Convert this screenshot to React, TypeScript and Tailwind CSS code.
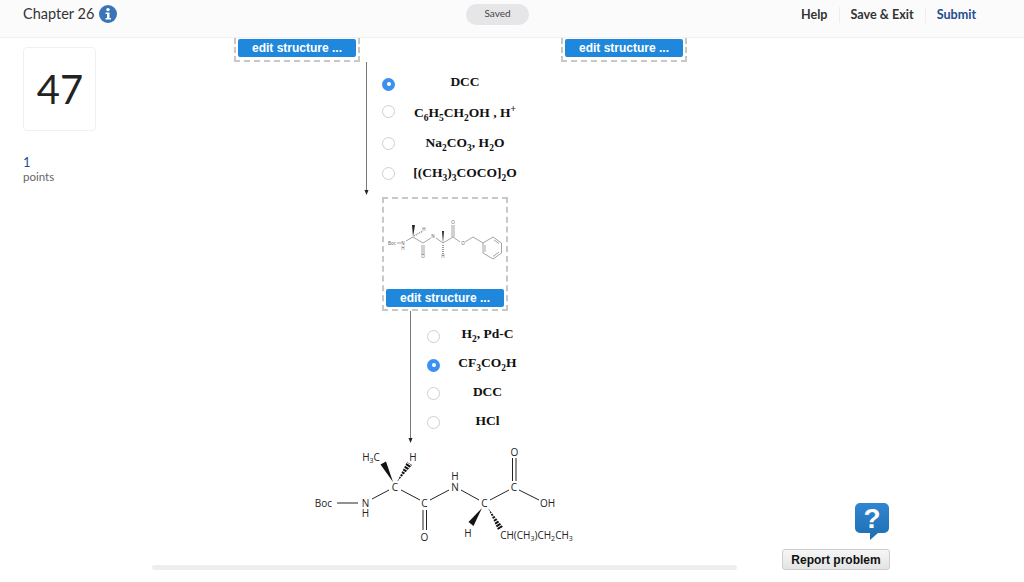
import type { ReactNode } from "react";

const S = ({ children }: { children: ReactNode }) => <sub className="-bottom-[4px] text-[9.5px]">{children}</sub>;

const Radio = ({ checked, className = "" }: { checked?: boolean; className?: string }) =>
    checked ? (
        <span className={`flex h-[13px] w-[13px] shrink-0 items-center justify-center rounded-full bg-[#3b90f0] ${className}`}>
            <span className="h-[4px] w-[4px] rounded-full bg-white"></span>
        </span>
    ) : (
        <span className={`h-[13px] w-[13px] shrink-0 rounded-full border border-[#cfcfcf] bg-white ${className}`}></span>
    );

interface OptionProps {
    checked?: boolean;
    children: ReactNode;
    radioClass?: string;
    rowClass: string;
    labelClass: string;
}

const Option = ({ checked, children, radioClass, rowClass, labelClass }: OptionProps) => (
    <div className={`flex items-center ${rowClass}`}>
        <Radio checked={checked} className={radioClass} />
        <div className={`text-center font-['Liberation_Serif',serif] text-[13.5px] font-bold leading-[15px] text-[#111] ${labelClass}`}>
            {children}
        </div>
    </div>
);

const Arrow = ({ height }: { height: number }) => (
    <svg width="7" height={height} viewBox={`0 0 7 ${height}`} className="shrink-0">
        <line x1="3.5" y1="0" x2="3.5" y2={height - 4} stroke="#777" strokeWidth="1" />
        <polygon points={`1.5,${height - 5} 5.5,${height - 5} 3.5,${height}`} fill="#222" />
    </svg>
);

const EditButton = () => (
    <div className="flex h-[18px] w-[118px] items-center justify-center rounded-[2px] bg-[#1f88dc] font-['Liberation_Sans',sans-serif] text-[12px] font-bold text-white">
        edit structure ...
    </div>
);

const TopBox = () => (
    <div className="flex h-[24px] w-[126px] justify-center border-2 border-t-0 border-dashed border-[#c8c8c8] bg-white pt-[1px]">
        <EditButton />
    </div>
);

const SmallMolecule = () => (
    <svg width="122" height="72" viewBox="384 199 122 72" className="block opacity-[0.99]">
        <g stroke="#666" strokeWidth="0.6" fill="none">
            <path d="M397 243H401M406 241L413 237L423 243L431 238M436 238L443 243L453 237L460 242M465 242L473 237L483 243" />
            <path d="M422 245V255M424 245V255M452 237V225M454 237V225" />
            <path d="M483 243L493 237L501.500 243V253L493 259L483 253Z" />
            <path d="M485 245V252M493 256.500L499 252M494 240L499 243.500" />
        </g>
        <polygon points="413,237 412,225 415,225" fill="#222" />
        <polygon points="443,243 442,231 444,231" fill="#222" />
        <path d="M414 236L423 231" stroke="#777" strokeWidth="1.200" strokeDasharray="1 1" />
        <path d="M443 245V254" stroke="#777" strokeWidth="1.500" strokeDasharray="1 1" />
        <g fontFamily="'Open Sans',sans-serif" fontSize="4.500" fill="#555" textAnchor="middle">
            <text x="392" y="245">Boc</text>
            <text x="403" y="245">N</text>
            <text x="403" y="250">H</text>
            <text x="424" y="231">H</text>
            <text x="423" y="258">O</text>
            <text x="433" y="238">N</text>
            <text x="443" y="258">H</text>
            <text x="453" y="224">O</text>
            <text x="463" y="245">O</text>
        </g>
    </svg>
);

const Molecule = () => (
    <svg width="270" height="100" viewBox="310 445 270 100" className="block opacity-[0.99]">
        <g stroke="#222" strokeWidth="1" fill="none">
            <path d="M337 503H358M372 499L389 490M401 490L420 500M430 500L449 490M461 490L479 500M490 500L509 490M519 490L539 500" />
            <path d="M423 510V530M426.500 510V530M512.500 458V481M516 458V481" />
        </g>
        <polygon points="393,482 380.500,464.500 386,461.500" fill="#111" />
        <polygon points="482,508 468.500,522 473.500,526" fill="#111" />
        <polygon points="397,482 407,462 412,465" fill="#111" />
        <path d="M397 482L410 462" stroke="#fff" strokeWidth="6" strokeDasharray="1 2" fill="none" />
        <polygon points="488,508 498,530 503,527" fill="#111" />
        <path d="M488 508L501 529" stroke="#fff" strokeWidth="8" strokeDasharray="1 2" fill="none" />
        <g fontFamily="'Open Sans',sans-serif" fontSize="10" fill="#222" textAnchor="middle">
            <text x="323.500" y="507">Boc</text>
            <text x="365.500" y="507">N</text>
            <text x="365.500" y="517">H</text>
            <text x="371" y="461">H<tspan fontSize="7" dy="2">3</tspan><tspan dy="-2">C</tspan></text>
            <text x="413" y="461">H</text>
            <text x="395" y="491">C</text>
            <text x="424.500" y="507">C</text>
            <text x="424.500" y="541">O</text>
            <text x="455" y="480">H</text>
            <text x="455" y="491">N</text>
            <text x="484.500" y="507">C</text>
            <text x="514" y="491">C</text>
            <text x="514.500" y="456">O</text>
            <text x="547.500" y="507">OH</text>
            <text x="468" y="537">H</text>
            <text x="536.500" y="539">CH(CH<tspan fontSize="7" dy="2">3</tspan><tspan dy="-2">)CH</tspan><tspan fontSize="7" dy="2">2</tspan><tspan dy="-2">CH</tspan><tspan fontSize="7" dy="2">3</tspan></text>
        </g>
    </svg>
);

export default function App() {
    return (
        <div className="relative flex h-[582px] w-[1024px] flex-col overflow-hidden bg-white font-['Lato',sans-serif]">
            <header className="flex h-[38px] shrink-0 items-center border-b border-[#f1f1f1] bg-[#fbfbfb] pb-[9px]">
                <div className="flex w-[443px] items-center pl-[23px]">
                    <span className="text-[14.5px] leading-none text-[#333]">Chapter 26</span>
                    <svg width="18" height="18" viewBox="0 0 18 18" className="ml-[5px]">
                        <circle cx="9" cy="9" r="9" fill="#3a74b8" />
                        <circle cx="9" cy="4.600" r="1.700" fill="#fff" />
                        <path d="M6.500 7.500H10.500V13H12V14.500H6.500V13H8V9H6.500Z" fill="#fff" />
                    </svg>
                </div>
                <div className="ml-[23px] flex h-[21px] w-[63px] items-center justify-center rounded-full bg-[#e6e5e8] pb-[2px] text-[10px] text-[#444]">
                    Saved
                </div>
                <nav className="ml-[272px] mt-[2px] flex items-center text-[12.6px] font-bold leading-none text-[#333]">
                    <span className="pr-[11px]">Help</span>
                    <span className="h-[16px] w-px bg-[#eeeeee]"></span>
                    <span className="px-[11px]">Save &amp; Exit</span>
                    <span className="h-[16px] w-px bg-[#eeeeee]"></span>
                    <span className="pl-[11px] text-[#1d4f91]">Submit</span>
                </nav>
            </header>

            <div className="flex min-h-0 flex-1">
                <aside className="w-[152px] shrink-0 pl-[23px] pt-[9px]">
                    <div className="flex h-[84px] w-[73px] items-center justify-center rounded-[4px] border border-[#f0f0f0] pl-[1px] text-[40px] leading-none text-[#222]">
                        47
                    </div>
                    <div className="mt-[24px] text-[13px] leading-[15px] text-[#1d4f91]">1</div>
                    <div className="text-[11.5px] leading-[14px] text-[#666]">points</div>
                </aside>

                <main className="flex-1">
                    <div className="ml-[82px] flex gap-[201px]">
                        <TopBox />
                        <TopBox />
                    </div>

                    <div className="ml-[211px] flex">
                        <Arrow height={133} />
                        <div className="ml-[12px] pt-[5px]">
                            <Option rowClass="h-[30px]" labelClass="w-[124px] pl-[16px]" checked radioClass="mt-[4px]"><span className="relative -top-[1px]">DCC</span></Option>
                            <Option rowClass="h-[30px]" labelClass="w-[124px] pl-[16px]" radioClass="-mt-[2px]">C<S>6</S>H<S>5</S>CH<S>2</S>OH , H<sup className="text-[9.5px]">+</sup></Option>
                            <Option rowClass="h-[30px]" labelClass="w-[124px] pl-[16px]" radioClass="mt-[2px]">Na<S>2</S>CO<S>3</S>, H<S>2</S>O</Option>
                            <Option rowClass="h-[30px]" labelClass="w-[124px] pl-[16px]" radioClass="mt-[2px]">[(CH<S>3</S>)<S>3</S>COCO]<S>2</S>O</Option>
                        </div>
                    </div>

                    <div className="ml-[230px] mt-[2px] flex h-[114px] w-[126px] flex-col items-center border-2 border-dashed border-[#c8c8c8] bg-white">
                        <SmallMolecule />
                        <div className="mt-[18px]">
                            <EditButton />
                        </div>
                    </div>

                    <div className="ml-[255px] flex">
                        <Arrow height={132} />
                        <div className="ml-[13px] pt-[8px]">
                            <Option rowClass="h-[29px]" labelClass="w-[95px]" radioClass="mt-[5px]">H<S>2</S>, Pd-C</Option>
                            <Option rowClass="h-[29px]" labelClass="w-[95px]" checked radioClass="mt-[5px]">CF<S>3</S>CO<S>2</S>H</Option>
                            <Option rowClass="h-[29px]" labelClass="w-[95px]" radioClass="mt-[4px]">DCC</Option>
                            <Option rowClass="h-[29px]" labelClass="w-[95px]" radioClass="mt-[4px]">HCl</Option>
                        </div>
                    </div>

                    <div className="ml-[158px] mt-[2px]">
                        <Molecule />
                    </div>
                    <div className="mt-[20px] h-[5px] w-[585px] rounded-sm bg-[#eeeeee]"></div>
                </main>
            </div>

            <div className="absolute left-[782px] top-[503px] flex w-[108px] flex-col items-end">
                <svg width="36" height="38" viewBox="0 0 36 38">
                    <defs>
                        <linearGradient id="helpBlue" x1="0" y1="0" x2="0" y2="1">
                            <stop offset="0" stopColor="#2f86d0" />
                            <stop offset="1" stopColor="#1f6db2" />
                        </linearGradient>
                    </defs>
                    <path d="M6 0H30A5 5 0 0 1 35 5V25A5 5 0 0 1 30 30H24L16 37V30H6A5 5 0 0 1 1 25V5A5 5 0 0 1 6 0Z" fill="url(#helpBlue)" />
                    <text x="18" y="25" textAnchor="middle" fontFamily="'Liberation Sans',sans-serif" fontWeight="bold" fontSize="28" fill="#fff">?</text>
                </svg>
                <div className="mt-[8px] flex h-[21px] w-[108px] items-center justify-center rounded-[3px] border border-[#cccccc] bg-gradient-to-b from-[#f6f6f6] to-[#e4e4e4] font-['Liberation_Sans',sans-serif] text-[12px] font-bold text-[#111]">
                    Report problem
                </div>
            </div>
        </div>
    );
}
